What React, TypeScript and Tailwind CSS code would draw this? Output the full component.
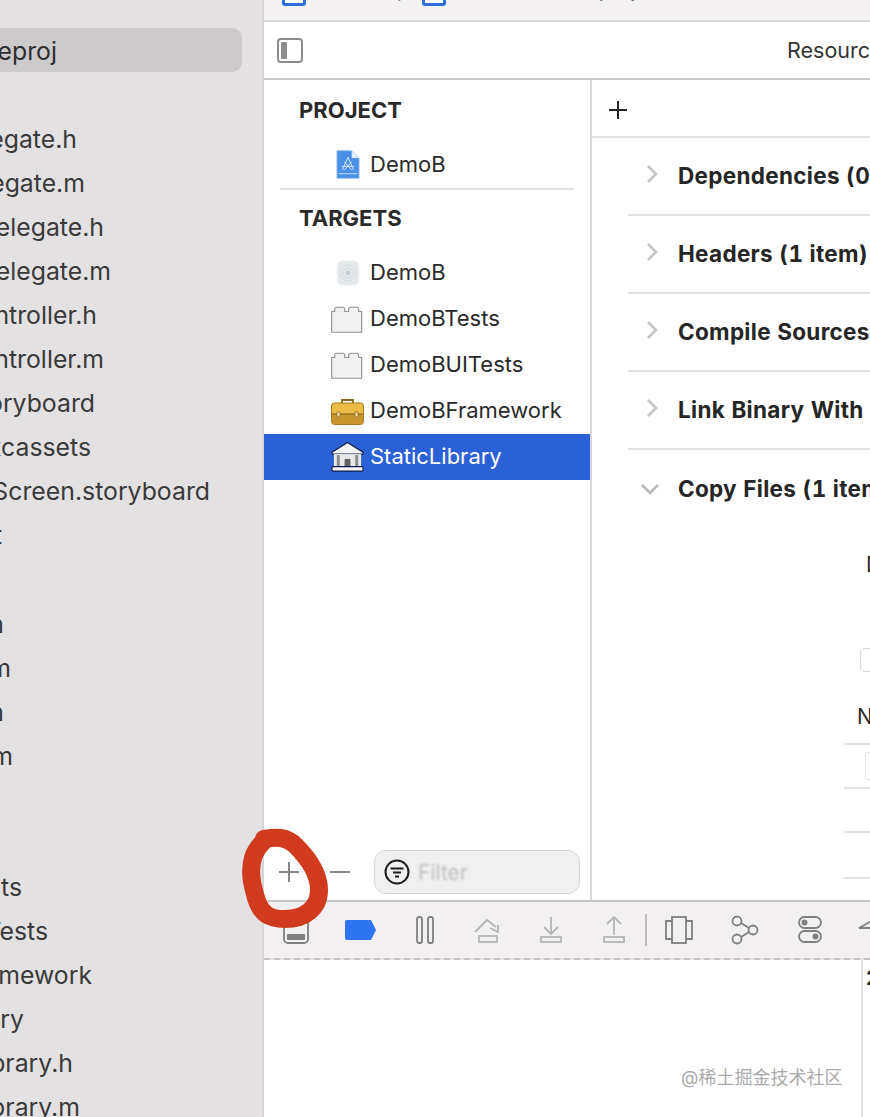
import React from 'react';

const FileRow: React.FC<{ name: string; right: string }> = ({ name, right }) => (
  <div className={`flex h-[44px] items-center justify-end whitespace-nowrap pt-[2px] ${right}`}>{name}</div>
);

const SectionRow: React.FC<{ title: string; open?: boolean }> = ({ title, open }) => (
  <div className={`ml-[36px] flex h-[78px] items-center whitespace-nowrap ${open ? '' : 'border-b-2 border-[#e3e3e3]'}`}>
    <div className="flex w-[50px] shrink-0 justify-start pl-[17px]">
      {open ? (
        <svg width="24" height="14" viewBox="0 0 24 14" fill="none" stroke="#b9b9b9" strokeWidth="2.6" className="-ml-[8px]">
          <path d="M5 3l8 8 8-8" />
        </svg>
      ) : (
        <svg width="14" height="20" viewBox="0 0 14 20" fill="none" stroke="#c4c4c4" strokeWidth="2.6" className="-mt-[4px]">
          <path d="M3 2l8 8-8 8" />
        </svg>
      )}
    </div>
    <span className="text-[22.5px] font-bold tabular-nums tracking-[0.3px] text-[#262626]">{title}</span>
  </div>
);

const TargetRow: React.FC<{ icon: React.ReactNode; name: string; selected?: boolean }> = ({ icon, name, selected }) => (
  <div className={`flex h-[46px] items-center pl-[67px] text-[22px] ${selected ? 'bg-[#2b61d6] text-white' : 'text-[#2a2a2a]'}`}>
    <div className="flex w-[39px] shrink-0 justify-start">{icon}</div>
    <span className="pb-[1px]">{name}</span>
  </div>
);

const AppFileIcon = () => (
  <svg width="24" height="31" viewBox="0 0 26 32" className="ml-[5px]">
    <path d="M1 1h16l8 8v22H1z" fill="#4a90e8" stroke="#9cc3f0" />
    <path d="M17 1l8 8h-8z" fill="#e4eefa" />
    <path d="M3 26h20" stroke="#cfe2f8" />
    <path d="M13 8l-6 14M13 8l6 14M6 18h14M9 13l8 9M17 13l-8 9" stroke="#d8e8fb" fill="none" strokeWidth="1" />
  </svg>
);

const AppTargetIcon = () => (
  <svg width="24" height="26" viewBox="0 0 24 26" className="ml-[5px]">
    <rect x="1" y="1" width="22" height="24" rx="5" fill="#e4e9ec" stroke="#edf0f2" />
    <circle cx="12" cy="13" r="8" fill="none" stroke="#d3dadf" />
    <circle cx="12" cy="13" r="5" fill="none" stroke="#d3dadf" />
    <circle cx="12" cy="13" r="2.5" fill="#c9d2d8" />
  </svg>
);

const BrickIcon = () => (
  <svg width="33" height="27" viewBox="0 0 33 27">
    <path d="M.7 26.3V5.5h3V3.2q0-2 2-2h6q2 0 2 2v2.300h4V3.2q0-2 2-2h6q2 0 2 2v2.300h3v20.800z" fill="#f1f1f1" stroke="#8f8f8f" strokeWidth="1.100" />
  </svg>
);

const ToolboxIcon = () => (
  <svg width="33" height="27" viewBox="0 0 33 27">
    <path d="M11 6V2h11v4" fill="none" stroke="#8c6a1f" strokeWidth="1.800" />
    <rect x="0.500" y="5" width="32" height="21.500" rx="3" fill="#ebbb45" stroke="#a47b22" />
    <rect x="1" y="16" width="31" height="10" rx="2" fill="#c9962c" />
    <path d="M1 16h31" stroke="#7c5c16" />
    <rect x="6" y="14" width="3" height="5" fill="#f3dd9a" stroke="#7c5c16" strokeWidth="0.600" />
    <rect x="24" y="14" width="3" height="5" fill="#f3dd9a" stroke="#7c5c16" strokeWidth="0.600" />
  </svg>
);

const LibraryIcon = () => (
  <svg width="33" height="32" viewBox="0 0 34 32">
    <path d="M17 1L1 11v2h32v-2z" fill="#f4f4f4" stroke="#10204a" strokeWidth="1.200" />
    <rect x="3" y="13" width="28" height="13" fill="#e8e8e8" />
    <rect x="6" y="14" width="3" height="12" fill="#8a8a8a" />
    <rect x="25" y="14" width="3" height="12" fill="#8a8a8a" />
    <rect x="14" y="18" width="6" height="8" fill="#5f5f5f" />
    <rect x="1" y="26" width="32" height="4.500" rx="1" fill="#f4f4f4" stroke="#10204a" strokeWidth="1.200" />
  </svg>
);

const ToolbarIcon: React.FC<{ className: string; children: React.ReactNode; w?: number; h?: number; color?: string }> = ({
  className,
  children,
  w = 32,
  h = 30,
  color = '#808080',
}) => (
  <svg width={w} height={h} viewBox={`0 0 ${w} ${h}`} fill="none" stroke={color} strokeWidth="1.800" className={`shrink-0 ${className}`}>
    {children}
  </svg>
);

export default function App() {
  return (
    <div className="relative flex h-[1117px] w-[870px] overflow-hidden bg-white font-['Inter','Noto_Sans_CJK_SC',sans-serif]">
      {/* navigator, clipped on the left */}
      <div className="h-full w-[264px] shrink-0 overflow-hidden border-r-2 border-[#d6d4d5] bg-[#e3e1e2] pt-[28px] text-[24.8px] text-[#3a3a3a]">
        <div className="flex h-[44px] w-[242px] items-center rounded-r-[10px] bg-[#cdcacb]">
          <div className="flex w-[57px] justify-end whitespace-nowrap pt-[3px] text-[#2e2e2e]">DemoB.xcodeproj</div>
        </div>
        <div className="mt-[45px]">
          <FileRow name="AppDelegate.h" right="w-[77px]" />
          <FileRow name="AppDelegate.m" right="w-[85px]" />
          <FileRow name="SceneDelegate.h" right="w-[104px]" />
          <FileRow name="SceneDelegate.m" right="w-[111px]" />
          <FileRow name="ViewController.h" right="w-[97px]" />
          <FileRow name="ViewController.m" right="w-[104px]" />
          <FileRow name="Main.storyboard" right="w-[95px]" />
          <FileRow name="Assets.xcassets" right="w-[91px]" />
          <FileRow name="LaunchScreen.storyboard" right="w-[210px]" />
          <FileRow name="Info.plist" right="w-[2px]" />
        </div>
        <div className="mt-[45px]">
          <FileRow name="DemoBTests.h" right="w-[4px]" />
          <FileRow name="DemoBTests.m" right="w-[11px]" />
          <FileRow name="DemoBUITests.h" right="w-[4px]" />
          <FileRow name="DemoBUITests.m" right="w-[13px]" />
        </div>
        <div className="mt-[87px]">
          <FileRow name="DemoBTests" right="w-[22px]" />
          <FileRow name="DemoBUITests" right="w-[48px]" />
          <FileRow name="DemoBFramework" right="w-[92px]" />
          <FileRow name="StaticLibrary" right="w-[24px]" />
          <FileRow name="StaticLibrary.h" right="w-[73px]" />
          <FileRow name="StaticLibrary.m" right="w-[80px]" />
        </div>
      </div>

      <div className="flex h-full min-w-0 flex-1 flex-col">
        {/* breadcrumbs */}
        <div className="flex h-[22px] shrink-0 items-end overflow-hidden border-b-2 border-[#dcdadb] bg-[#f5f2f3] pb-[14px] pl-[18px]">
          <div className="h-[24px] w-[24px] shrink-0 rounded-[3px] border-[3px] border-[#2f6fdc] bg-white" />
          <span className="mb-[4px] ml-[10px] w-[82px] shrink-0 text-[20px] leading-[24px] text-[#cfcdcd] blur-[1px]">DemoB</span>
          <span className="mb-[2px] w-[24px] shrink-0 text-[20px] leading-[24px] text-[#888]">/</span>
          <div className="h-[24px] w-[24px] shrink-0 rounded-[3px] border-[3px] border-[#2f6fdc] bg-white" />
          <span className="mb-[4px] ml-[14px] whitespace-nowrap text-[21px] leading-[24px] text-[#777]">DemoB.xcodeproj</span>
        </div>

        {/* tab bar */}
        <div className="flex h-[58px] shrink-0 items-center border-b-2 border-[#c6c6c6] pl-[13px]">
          <div className="flex h-[25px] w-[26px] shrink-0 items-center rounded-[4px] border-2 border-[#8c8c8c] pl-[2px]">
            <div className="h-[17px] w-[6px] rounded-[1px] bg-[#8c8c8c]" />
          </div>
          <span className="ml-[484px] whitespace-nowrap pt-[1px] text-[21.5px] text-[#333]">Resource Tags</span>
        </div>

        <div className="flex min-h-0 flex-1">
          {/* project and targets */}
          <div className="flex w-[328px] shrink-0 flex-col border-r-2 border-[#d8d8d8]">
            <div className="flex h-[60px] shrink-0 items-center pl-[35px] text-[22px] font-bold text-[#2a2a2a]">PROJECT</div>
            <div className="flex h-[48px] shrink-0 items-center pl-[67px] text-[22px] text-[#2a2a2a]">
              <div className="flex w-[39px] shrink-0"><AppFileIcon /></div>
              <span>DemoB</span>
            </div>
            <div className="mx-[16px] h-[2px] w-[294px] shrink-0 bg-[#e3e3e3]" />
            <div className="flex h-[56px] shrink-0 items-center pl-[35px] text-[22px] font-bold text-[#2a2a2a]">TARGETS</div>
            <div className="mt-[4px]">
              <TargetRow icon={<AppTargetIcon />} name="DemoB" />
              <TargetRow icon={<BrickIcon />} name="DemoBTests" />
              <TargetRow icon={<BrickIcon />} name="DemoBUITests" />
              <TargetRow icon={<ToolboxIcon />} name="DemoBFramework" />
              <TargetRow icon={<LibraryIcon />} name="StaticLibrary" selected />
            </div>
            <div className="mt-auto flex h-[56px] shrink-0 items-center">
              <svg width="24" height="24" viewBox="0 0 24 24" stroke="#858585" strokeWidth="2" className="ml-[13px] shrink-0">
                <path d="M12 2v20M2 12h20" />
              </svg>
              <svg width="24" height="24" viewBox="0 0 24 24" stroke="#858585" strokeWidth="2" className="ml-[27px] shrink-0">
                <path d="M2 12h20" />
              </svg>
              <div className="ml-[22px] flex h-[44px] w-[206px] shrink-0 items-center rounded-[12px] border border-[#d6d6d6] bg-[#f0f0f0] pl-[9px]">
                <svg width="26" height="26" viewBox="0 0 26 26" fill="none" stroke="#1c1c1c" strokeWidth="2">
                  <circle cx="13" cy="13" r="11.500" />
                  <path d="M6.500 9.500h13M9 13.500h8M11 17.500h4" />
                </svg>
                <span className="ml-[8px] pt-[1px] text-[21px] text-[#bcbcbc] blur-[0.8px]">Filter</span>
              </div>
            </div>
          </div>

          {/* build phases */}
          <div className="min-w-0 flex-1 overflow-hidden">
            <div className="flex h-[58px] items-center border-b-2 border-[#e3e3e3] pl-[16px] pt-[4px]">
              <svg width="20" height="20" viewBox="0 0 20 20" stroke="#262626" strokeWidth="2">
                <path d="M10 1v18M1 10h18" />
              </svg>
            </div>
            <SectionRow title="Dependencies (0 items)" />
            <SectionRow title="Headers (1 item)" />
            <SectionRow title="Compile Sources (2 items)" />
            <SectionRow title="Link Binary With Libraries (0 items)" />
            <SectionRow title="Copy Files (1 item)" open />
            <div className="whitespace-nowrap pl-[274px] pt-[21px] text-[21px] text-[#2a2a2a]">Destination</div>
            <div className="ml-[268px] mt-[67px] h-[24px] w-[40px] rounded-[5px] border border-[#d6d6d6]" />
            <div className="mt-[31px] whitespace-nowrap pl-[265px] text-[21px] leading-[28px] text-[#2a2a2a]">Name</div>
            <div className="ml-[252px] mt-[12px] h-[2px] w-[40px] bg-[#e3e3e3]" />
            <div className="ml-[273px] mt-[7px] h-[28px] w-[30px] rounded-[3px] border border-[#e3e3e3]" />
            <div className="ml-[252px] mt-[7px] h-[2px] w-[40px] bg-[#e3e3e3]" />
            <div className="ml-[252px] mt-[42px] h-[2px] w-[40px] bg-[#e3e3e3]" />
            <div className="ml-[252px] mt-[44px] h-[2px] w-[40px] bg-[#e3e3e3]" />
          </div>
        </div>

        {/* debug toolbar */}
        <div className="flex h-[58px] shrink-0 items-center overflow-hidden border-t-2 border-[#c6c6c6] bg-[#f3f0f1]">
          <ToolbarIcon className="ml-[18px]" w={28} h={28}>
            <rect x="2" y="1" width="24" height="26" rx="4" />
            <rect x="5" y="18" width="18" height="6" rx="1" fill="#808080" stroke="none" />
          </ToolbarIcon>
          <svg width="32" height="20" viewBox="0 0 32 20" className="ml-[35px] shrink-0">
            <path d="M0 2q0-2 2-2h24l5 10-5 10H2q-2 0-2-2z" fill="#2f74f0" />
          </svg>
          <ToolbarIcon className="ml-[38px]" w={20} h={28}>
            <rect x="2" y="1" width="5" height="26" rx="2" />
            <rect x="13" y="1" width="5" height="26" rx="2" />
          </ToolbarIcon>
          <ToolbarIcon className="ml-[38px]" color="#b5b5b5">
            <path d="M2 17L14 5l9 7M17 13l8 4v-7" />
            <rect x="6" y="21" width="18" height="6" />
          </ToolbarIcon>
          <ToolbarIcon className="ml-[33px]" w={26} color="#b5b5b5">
            <path d="M13 2v16M6 12l7 7 7-7" />
            <rect x="3" y="22" width="20" height="5" />
          </ToolbarIcon>
          <ToolbarIcon className="ml-[37px]" w={26} color="#b5b5b5">
            <path d="M13 20V3M6 9l7-7 7 7" />
            <rect x="3" y="22" width="20" height="5" />
          </ToolbarIcon>
          <div className="ml-[18px] h-[32px] w-[2px] shrink-0 bg-[#bdbbbb]" />
          <ToolbarIcon className="ml-[18px]" w={28}>
            <rect x="7" y="2" width="14" height="26" />
            <path d="M7 6H1v18h6M21 6h6v18h-6" />
          </ToolbarIcon>
          <ToolbarIcon className="ml-[37px]" w={30}>
            <circle cx="7" cy="6" r="4.500" />
            <circle cx="7" cy="24" r="4.500" />
            <circle cx="23" cy="15" r="4.500" />
            <path d="M11 8l8 5M11 22l8-5" />
          </ToolbarIcon>
          <ToolbarIcon className="ml-[37px]" w={26}>
            <rect x="2" y="2" width="22" height="11" rx="5.500" />
            <rect x="2" y="16" width="22" height="11" rx="5.500" />
            <circle cx="7.500" cy="7.500" r="3" fill="#808080" stroke="none" />
            <circle cx="18.500" cy="21.500" r="3" fill="#808080" stroke="none" />
          </ToolbarIcon>
          <ToolbarIcon className="ml-[34px]" w={20}>
            <path d="M2 13L18 4M2 13h18" />
          </ToolbarIcon>
        </div>
        <div className="h-[2px] shrink-0 border-t-2 border-dashed border-[#c4c2c3] bg-[#e2e0e1]" />

        {/* console */}
        <div className="flex h-[157px] shrink-0 justify-end">
          <div className="w-[9px] shrink-0 overflow-hidden border-l-2 border-[#e0e0e0] pl-[3px] pt-[6px] text-[20px] font-semibold leading-[24px] text-[#222]">2</div>
        </div>
      </div>

      {/* red pen mark over the add button */}
      <svg width="100" height="110" viewBox="0 0 100 110" fill="none" className="absolute left-[240px] top-[825px]">
        <path
          d="M24 14c12-2 22-3 32 7 12 12 23 28 23 44 0 18-14 29-34 29-16 0-24-5-29-21-4-14-7-26-3-40 2-7 5-11 11-17"
          stroke="#d03a1e"
          strokeWidth="18"
          strokeLinecap="round"
        />
      </svg>

      <div className="absolute left-[681px] top-[1066px] whitespace-nowrap text-[18px] leading-[24px] text-[#aaaaaa]">@稀土掘金技术社区</div>
    </div>
  );
}
